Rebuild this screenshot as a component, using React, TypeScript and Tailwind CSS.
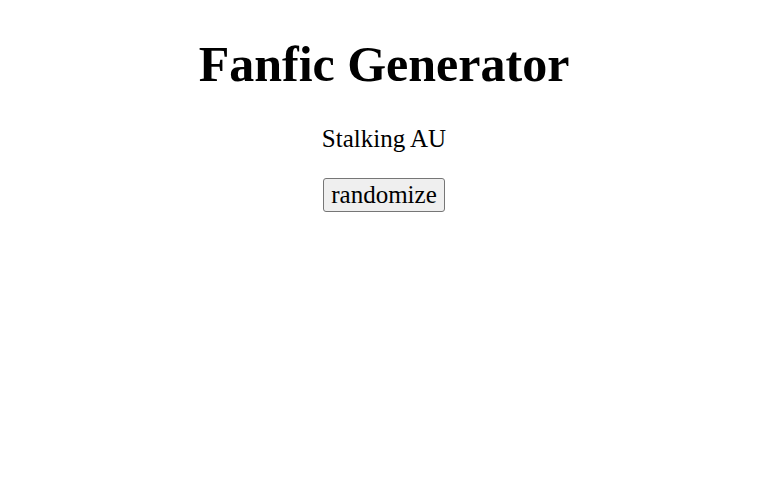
import { useState } from 'react';

const premises = [
  'Stalking AU',
  'Coffee Shop AU',
  'Enemies to Lovers',
  'Soulmate AU',
  'Fake Dating AU',
  'Time Travel AU',
];

function App() {
  const [premise, setPremise] = useState(premises[0]);

  const randomize = () => {
    setPremise(premises[Math.floor(Math.random() * premises.length)]);
  };

  return (
    <div className="min-h-screen bg-white text-black font-['Liberation_Serif',serif] flex flex-col items-center">
      <h1 className="mt-[36px] text-[50px] leading-[56px] font-bold">Fanfic Generator</h1>
      <p className="mt-[33px] text-[25px] leading-[28px]">{premise}</p>
      <button
        onClick={randomize}
        className="mt-[25px] px-[7px] py-[3px] text-[25px] leading-[26px] bg-[#efefef] border border-[#767676] rounded-[3px] hover:bg-[#e5e5e5]"
      >
        randomize
      </button>
    </div>
  );
}

export default App;
